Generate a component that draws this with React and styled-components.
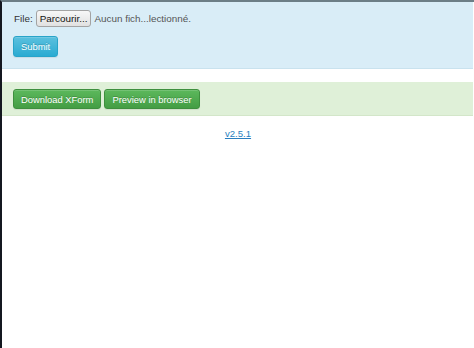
import React from "react";
import styled, { createGlobalStyle } from "styled-components";

const Global = createGlobalStyle`
  html, body { margin: 0; padding: 0; background: #fff; }
  body { font-family: "Liberation Sans", Arial, sans-serif; font-size: 10px; color: #333; }
`;

const Frame = styled.div`
  min-height: 348px;
  box-sizing: border-box;
  border-left: 2px solid #141820;
  border-top: 2px solid #6c7e86;
  display: flex;
  flex-direction: column;
`;

const Panel = styled.div`
  background: ${(p) => p.$bg};
  border-bottom: 1px solid ${(p) => p.$border};
  padding: ${(p) => p.$pad};
  margin-right: 1px;
  display: flex;
  flex-direction: ${(p) => (p.$column ? "column" : "row")};
  align-items: flex-start;
  gap: ${(p) => p.$gap || "0"};
`;

const FileRow = styled.div`
  display: flex;
  align-items: center;
  height: 17px;
  padding-left: 1px;
  font-size: 9.9px;
`;

const Label = styled.span`
  color: #333;
  margin-right: 3px;
`;

const BrowseButton = styled.span`
  display: inline-flex;
  align-items: center;
  height: 17px;
  box-sizing: border-box;
  padding: 0 3px;
  border: 1px solid #a3a3a3;
  border-radius: 3px;
  background: linear-gradient(#f7f7f7, #e1e1e1);
  color: #111;
  margin-right: 3px;
`;

const FileName = styled.span`
  color: #555;
`;

const Btn = styled.button`
  font-family: "Liberation Sans", Arial, sans-serif;
  font-size: 9.4px;
  color: #fff;
  height: ${(p) => p.$h || "20px"};
  padding: 0 7px;
  border-radius: 3px;
  border: 1px solid ${(p) => p.$border};
  background: linear-gradient(${(p) => p.$from}, ${(p) => p.$to});
  box-shadow: inset 0 1px 0 rgba(255,255,255,.15), 0 1px 1px rgba(0,0,0,.075);
  text-shadow: 0 -1px 0 rgba(0,0,0,.2);
  cursor: pointer;
`;

const Spacer = styled.div`
  height: 13px;
`;

const Footer = styled.div`
  text-align: center;
  padding-top: 12px;
`;

const Link = styled.a`
  color: #2a7fc0;
  text-decoration: underline;
  font-size: 9.6px;
`;

export default function App() {
  return (
    <>
      <Global />
      <Frame>
        <Panel $bg="#d9edf7" $border="#c9e2ee" $pad="8px 11px 11px" $column $gap="9px">
          <FileRow>
            <Label>File:</Label>
            <BrowseButton>Parcourir...</BrowseButton>
            <FileName>Aucun fich...lectionné.</FileName>
          </FileRow>
          <Btn $from="#5bc0de" $to="#2aabd2" $border="#28a4c9" $h="21px">
            Submit
          </Btn>
        </Panel>
        <Spacer />
        <Panel $bg="#dff0d8" $border="#d3e6c9" $pad="7px 11px 6px" $gap="3px">
          <Btn $from="#5cb85c" $to="#449d44" $border="#3e8f3e">Download XForm</Btn>
          <Btn $from="#5cb85c" $to="#449d44" $border="#3e8f3e">Preview in browser</Btn>
        </Panel>
        <Footer>
          <Link href="#">v2.5.1</Link>
        </Footer>
      </Frame>
    </>
  );
}
